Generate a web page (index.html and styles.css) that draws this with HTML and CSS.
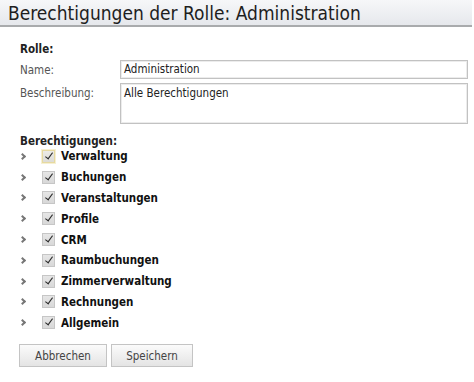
FILE: index.html
```html
<!DOCTYPE html>
<html lang="de">
<head>
<meta charset="utf-8">
<title>Berechtigungen der Rolle: Administration</title>
<link rel="stylesheet" href="styles.css">
</head>
<body>
<div class="titlebar"><h1 class="title">Berechtigungen der Rolle: Administration</h1></div>
<div class="content">
  <div class="section-label">Rolle:</div>
  <div class="field">
    <label class="field-label">Name:</label>
    <div class="input">Administration</div>
  </div>
  <div class="field">
    <label class="field-label">Beschreibung:</label>
    <div class="input textarea">Alle Berechtigungen</div>
  </div>
  <div class="section-label perm-label">Berechtigungen:</div>
  <ul class="tree">
    <li class="node"><span class="arrow"></span><span class="check focus"></span><span class="node-text">Verwaltung</span></li>
    <li class="node"><span class="arrow"></span><span class="check"></span><span class="node-text">Buchungen</span></li>
    <li class="node"><span class="arrow"></span><span class="check"></span><span class="node-text">Veranstaltungen</span></li>
    <li class="node"><span class="arrow"></span><span class="check"></span><span class="node-text">Profile</span></li>
    <li class="node"><span class="arrow"></span><span class="check"></span><span class="node-text">CRM</span></li>
    <li class="node"><span class="arrow"></span><span class="check"></span><span class="node-text">Raumbuchungen</span></li>
    <li class="node"><span class="arrow"></span><span class="check"></span><span class="node-text">Zimmerverwaltung</span></li>
    <li class="node"><span class="arrow"></span><span class="check"></span><span class="node-text">Rechnungen</span></li>
    <li class="node"><span class="arrow"></span><span class="check"></span><span class="node-text">Allgemein</span></li>
  </ul>
  <div class="buttons">
    <button class="btn btn-cancel">Abbrechen</button>
    <button class="btn btn-save">Speichern</button>
  </div>
</div>
</body>
</html>
```
FILE: styles.css
```css
html, body {
  margin: 0;
  padding: 0;
  background: #ffffff;
}
body {
  font-family: "DejaVu Sans Condensed", "DejaVu Sans", sans-serif;
  font-size: 11.5px;
  color: #333;
}
.titlebar {
  height: 25px;
  width: 472px;
  background: linear-gradient(#f6f7f9, #e6e8ec);
  border-bottom: 2px solid #a9abad;
  box-sizing: content-box;
}
.title {
  margin: 0;
  padding: 1px 0 0 8px;
  font-size: 19px;
  font-weight: normal;
  line-height: 24px;
  color: #1e1e1e;
}
.content {
  padding: 14px 6px 0 20px;
}
.section-label {
  font-weight: bold;
  color: #222;
  height: 16px;
  line-height: 16px;
  margin-bottom: 3px;
}
.field {
  display: flex;
  align-items: flex-start;
  height: 19px;
  margin-bottom: 4px;
}
.field + .field {
  height: 41px;
}
.field-label {
  width: 100px;
  color: #555;
  line-height: 20px;
}
.input {
  width: 348px;
  height: 19px;
  box-sizing: border-box;
  border: 1px solid #c2c2c2;
  box-shadow: inset 0 0 0 1px #ececec;
  padding: 0 3px;
  line-height: 17px;
  color: #222;
}
.textarea {
  height: 41px;
  padding-top: 1px;
}
.perm-label {
  margin-top: 10px;
  margin-bottom: 0;
  line-height: 14px;
  height: 14px;
}
.tree {
  list-style: none;
  margin: -2px 0 0 0;
  padding: 0;
}
.node {
  display: flex;
  align-items: center;
  height: 20.8px;
}
.arrow {
  width: 3px;
  height: 3px;
  border-right: 2px solid #777;
  border-top: 2px solid #777;
  transform: rotate(45deg);
  margin-left: 0;
  margin-right: 17px;
}
.check {
  position: relative;
  width: 11px;
  height: 11px;
  border: 1px solid #c6c6c6;
  background: linear-gradient(#e6e6e6, #d8d8d8);
  margin-right: 6px;
}
.check.focus {
  border-color: #e6d9a0;
  background: linear-gradient(#ecebe6, #dcdbd6);
  box-shadow: 0 0 0 1px #f6f0d2;
}
.check::after {
  content: "";
  position: absolute;
  left: 3.5px;
  top: 0px;
  width: 3px;
  height: 7px;
  border-right: 1.6px solid #2a2a2a;
  border-bottom: 1.6px solid #2a2a2a;
  transform: rotate(36deg);
}
.node-text {
  font-weight: bold;
  color: #111;
  font-size: 11.5px;
}
.buttons {
  display: flex;
  gap: 4px;
  margin-top: 11px;
  margin-left: -1px;
}
.btn {
  height: 23px;
  font-family: inherit;
  font-size: 11.5px;
  color: #444;
  background: linear-gradient(#fbfbfb, #e4e4e4);
  border: 1px solid #c4c4c4;
  border-radius: 0;
  padding: 0;
}
.btn-cancel { width: 88px; }
.btn-save { width: 82px; }
```
